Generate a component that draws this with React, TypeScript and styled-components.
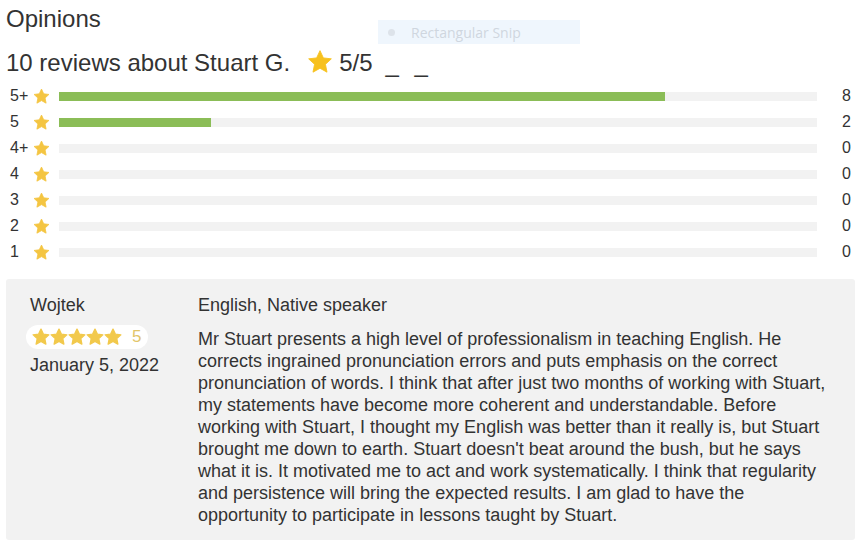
import React from 'react';
import styled, { createGlobalStyle } from 'styled-components';

const GlobalStyle = createGlobalStyle`
  html, body {
    margin: 0;
    padding: 0;
    background: #ffffff;
  }
  body {
    font-family: 'Liberation Sans', Arial, sans-serif;
    color: #333333;
  }
`;

const ratings = [
  { label: '5+', count: 8 },
  { label: '5', count: 2 },
  { label: '4+', count: 0 },
  { label: '4', count: 0 },
  { label: '3', count: 0 },
  { label: '2', count: 0 },
  { label: '1', count: 0 },
];
const total = 10;

const reviewText =
  "Mr Stuart presents a high level of professionalism in teaching English. He corrects ingrained pronunciation errors and puts emphasis on the correct pronunciation of words. I think that after just two months of working with Stuart, my statements have become more coherent and understandable. Before working with Stuart, I thought my English was better than it really is, but Stuart brought me down to earth. Stuart doesn't beat around the bush, but he says what it is. It motivated me to act and work systematically. I think that regularity and persistence will bring the expected results. I am glad to have the opportunity to participate in lessons taught by Stuart.";

// fat five-pointed star, as on the site
const Star: React.FC<{ size: number; color: string; stroke?: number }> = ({
  size,
  color,
  stroke = 1.2,
}) => (
  <svg width={size} height={size} viewBox="0 0 24 24" style={{ display: 'block' }}>
    <path
      d="M12 1.5L15.12 8.21L22.46 9.1L17.04 14.14L18.47 21.4L12 17.8L5.53 21.4L6.96 14.14L1.54 9.1L8.88 8.21Z"
      fill={color}
      stroke={color}
      strokeWidth={stroke}
      strokeLinejoin="round"
    />
  </svg>
);

const App: React.FC = () => {
  return (
    <>
      <GlobalStyle />
      <Page>
        <SnipHint>
          <SnipDot />
          Rectangular Snip
        </SnipHint>
        <Title>Opinions</Title>
        <Summary>
          10 reviews about Stuart G.
          <SummaryStar>
            <Star size={26} color="#f7c11e" stroke={0.8} />
          </SummaryStar>
          <Score>5/5</Score>
          <Dashes>_ _</Dashes>
        </Summary>

        <Rows>
          {ratings.map(r => (
            <Row key={r.label}>
              <RowLabel>{r.label}</RowLabel>
              <Star size={17} color="#f4c542" />
              <Track>
                <Fill style={{ width: `${(r.count / total) * 100}%` }} />
              </Track>
              <Count>{r.count}</Count>
            </Row>
          ))}
        </Rows>

        <Card>
          <Author>
            <Name>Wojtek</Name>
            <Pill>
              <PillStars>
                {[0, 1, 2, 3, 4].map(i => (
                  <Star key={i} size={18} color="#f2c94c" stroke={1.8} />
                ))}
              </PillStars>
              <PillScore>5</PillScore>
            </Pill>
            <DateText>January 5, 2022</DateText>
          </Author>
          <Content>
            <Subject>English, Native speaker</Subject>
            <Body>{reviewText}</Body>
          </Content>
        </Card>
      </Page>
    </>
  );
};

export default App;

const Page = styled.div`
  position: relative;
  padding: 5px 6px 4px;
`;

const SnipHint = styled.div`
  position: absolute;
  left: 378px;
  top: 20px;
  width: 202px;
  height: 24px;
  box-sizing: border-box;
  display: flex;
  align-items: center;
  padding-left: 10px;
  gap: 16px;
  background: rgba(226, 238, 252, 0.55);
  color: #cfd6df;
  font-family: 'Open Sans', 'Liberation Sans', sans-serif;
  font-size: 14px;
`;

const SnipDot = styled.span`
  width: 7px;
  height: 7px;
  border-radius: 50%;
  background: #dde3ea;
`;

const Title = styled.h2`
  margin: 0;
  font-size: 24px;
  font-weight: normal;
  line-height: 28px;
  color: #333333;
`;

const Summary = styled.h3`
  margin: 15px 0 0;
  display: flex;
  align-items: center;
  font-size: 24px;
  font-weight: normal;
  line-height: 28px;
  color: #333333;
`;

const SummaryStar = styled.span`
  margin-left: 17px;
  margin-top: -3px;
`;

const Score = styled.span`
  margin-left: 6px;
`;

const Dashes = styled.span`
  margin-left: 13px;
  margin-top: 2px;
  word-spacing: 9px;
`;

const Rows = styled.div`
  margin-top: 5px;
  padding: 0 4px;
`;

const Row = styled.div`
  display: flex;
  align-items: center;
  height: 26px;
  font-size: 16px;
  color: #333333;
`;

const RowLabel = styled.span`
  width: 23px;
`;

const Track = styled.div`
  flex: 1;
  height: 9px;
  margin-left: 9px;
  background: #f2f2f2;
`;

const Fill = styled.div`
  height: 100%;
  background: #8bbd57;
`;

const Count = styled.span`
  width: 34px;
  text-align: right;
`;

const Card = styled.div`
  margin-top: 14px;
  display: flex;
  padding: 15px 24px 14px;
  background: #f2f2f2;
  border-radius: 3px;
  font-size: 18px;
  line-height: 22px;
  color: #333333;
`;

const Author = styled.div`
  width: 168px;
  flex-shrink: 0;
`;

const Name = styled.div``;

const Pill = styled.div`
  margin: 9px 0 0 -4px;
  width: 122px;
  height: 24px;
  box-sizing: border-box;
  display: flex;
  align-items: center;
  padding-left: 6px;
  background: #ffffff;
  border-radius: 12px;
`;

const PillStars = styled.div`
  display: flex;
`;

const PillScore = styled.span`
  margin-left: 10px;
  font-size: 17px;
  color: #e2c56a;
`;

const DateText = styled.div`
  margin-top: 5px;
`;

const Content = styled.div`
  width: 632px;
`;

const Subject = styled.div``;

const Body = styled.p`
  margin: 12px 0 0;
`;
